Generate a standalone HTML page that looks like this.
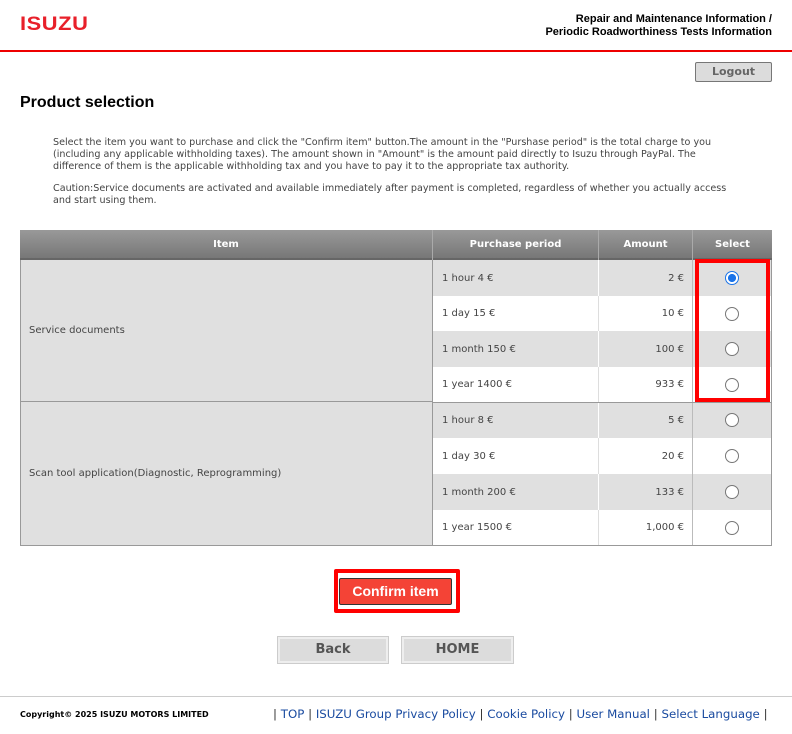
<!DOCTYPE html>
<html><head><meta charset="utf-8"><style>
*{margin:0;padding:0;box-sizing:border-box}
body{width:792px;height:734px;position:relative;background:#fff;font-family:Verdana,"DejaVu Sans","Liberation Sans",sans-serif;color:#333;overflow:hidden}
.a{position:absolute}
.hd{font-family:"Liberation Sans",sans-serif;font-weight:bold;font-size:11px;color:#000;text-align:right;line-height:13px}
.t{font-size:9.6px;line-height:12px;color:#444}
.c{position:absolute;font-size:10px;color:#444;display:flex;align-items:center}
.r{position:absolute;width:14px;height:14px;border:1px solid #777;border-radius:50%;background:#fff}
.btn{position:absolute;background:#dcdcdc;border:2px solid #eee;outline:1px solid #ccc;font-weight:bold;font-size:13px;color:#555;text-align:center}
</style></head><body>
<div class="a" style="left:20px;top:14px;font-family:'Liberation Sans',sans-serif;font-weight:900;font-size:19px;color:#e8202a;letter-spacing:0.5px;transform:scaleX(1.15);transform-origin:left">ISUZU</div>
<div class="a hd" style="right:20px;top:13px">Repair and Maintenance Information /<br>Periodic Roadworthiness Tests Information</div>
<div class="a" style="left:0;top:50px;width:792px;height:2px;background:#e00"></div>
<div class="a" style="left:695px;top:62px;width:77px;height:20px;background:#dcdcdc;border:1px solid #777;border-radius:2px;font-size:11px;font-weight:bold;color:#666;text-align:center;line-height:18px">Logout</div>
<div class="a" style="left:20px;top:94px;font-family:'Liberation Sans',sans-serif;font-weight:bold;font-size:16px;color:#000">Product selection</div>
<div class="a t" style="left:53px;top:137px;width:680px">Select the item you want to purchase and click the "Confirm item" button.The amount in the "Purshase period" is the total charge to you (including any applicable withholding taxes). The amount shown in "Amount" is the amount paid directly to Isuzu through PayPal. The difference of them is the applicable withholding tax and you have to pay it to the appropriate tax authority.</div>
<div class="a t" style="left:53px;top:183px;width:690px">Caution:Service documents are activated and available immediately after payment is completed, regardless of whether you actually access and start using them.</div>

<div class="a" style="left:20px;top:230px;width:752px;height:30px;background:linear-gradient(#999,#777);border-bottom:2px solid #666"></div>
<div class="a" style="left:20px;top:230px;width:412px;height:30px;color:#fff;font-size:10px;font-weight:bold;text-align:center;line-height:30px">Item</div>
<div class="a" style="left:432px;top:230px;width:166px;height:30px;color:#fff;font-size:10px;font-weight:bold;text-align:center;line-height:30px;border-left:1px solid #aaa">Purchase period</div>
<div class="a" style="left:598px;top:230px;width:94px;height:30px;color:#fff;font-size:10px;font-weight:bold;text-align:center;line-height:30px;border-left:1px solid #aaa">Amount</div>
<div class="a" style="left:692px;top:230px;width:80px;height:30px;color:#fff;font-size:10px;font-weight:bold;text-align:center;line-height:30px;border-left:1px solid #aaa">Select</div>

<div class="a" style="left:20px;top:260px;width:752px;height:286px;border:1px solid #999;border-top:none;background:#fff"></div>
<div class="c" style="left:21px;top:260px;width:411px;height:142px;background:#e0e0e0;padding-left:8px;border-bottom:1px solid #999">Service documents</div>
<div class="c" style="left:21px;top:402px;width:411px;height:143px;background:#e0e0e0;padding-left:8px">Scan tool application(Diagnostic, Reprogramming)</div>
<div id="rows"></div>
<script>
var d=[["1 hour 4 €","2 €"],["1 day 15 €","10 €"],["1 month 150 €","100 €"],["1 year 1400 €","933 €"],["1 hour 8 €","5 €"],["1 day 30 €","20 €"],["1 month 200 €","133 €"],["1 year 1500 €","1,000 €"]];
var tops=[260,296,331,367,402,438,474,510,545],h="";
for(var i=0;i<8;i++){var t=tops[i],ht=tops[i+1]-t,bg=i%2==0?"#e0e0e0":"#fff";
h+='<div class="a" style="left:432px;top:'+t+'px;width:339px;height:'+ht+'px;background:'+bg+';border-left:1px solid #999"></div>';
h+='<div class="a" style="left:598px;top:'+t+'px;width:1px;height:'+ht+'px;background:'+(i%2==0?'#fff':'#ddd')+'"></div>';
h+='<div class="a" style="left:692px;top:'+t+'px;width:1px;height:'+ht+'px;background:#bbb"></div>';
h+='<div class="c" style="left:442px;top:'+t+'px;height:'+ht+'px">'+d[i][0]+'</div>';
h+='<div class="c" style="left:598px;top:'+t+'px;width:86px;height:'+ht+'px;justify-content:flex-end">'+d[i][1]+'</div>';
h+='<div class="r" style="left:725px;top:'+(t+ht/2-7)+'px;'+(i==0?'border-color:#1a73e8;background:radial-gradient(#1a73e8 45%,#fff 50%)':'')+'"></div>';}
h+='<div class="a" style="left:432px;top:402px;width:340px;height:1px;background:#999"></div>';
document.getElementById("rows").innerHTML=h;
</script>
<div class="a" style="left:695px;top:259px;width:75px;height:143px;border:4px solid #f00"></div>

<div class="a" style="left:334px;top:569px;width:126px;height:44px;border:4px solid #f00;border-radius:2px"></div>
<div class="a" style="left:339px;top:578px;width:113px;height:27px;background:#f44336;border:1px solid #333;border-radius:2px;color:#fff;font-weight:bold;font-family:'Liberation Sans',sans-serif;font-size:14px;text-align:center;line-height:25px">Confirm item</div>
<div class="btn" style="left:278px;top:637px;width:110px;height:26px;line-height:22px">Back</div>
<div class="btn" style="left:402px;top:637px;width:111px;height:26px;line-height:22px">HOME</div>
<div class="a" style="left:0;top:696px;width:792px;height:1px;background:#ccc"></div>
<div class="a" style="left:20px;top:710px;font-size:8px;font-weight:bold;color:#000">Copyright© 2025 ISUZU MOTORS LIMITED</div>
<div class="a" style="left:273px;top:707px;font-size:11.8px;color:#1a4ba0;white-space:nowrap"><span style="color:#333">|</span> TOP <span style="color:#333">|</span> ISUZU Group Privacy Policy <span style="color:#333">|</span> Cookie Policy <span style="color:#333">|</span> User Manual <span style="color:#333">|</span> Select Language <span style="color:#333">|</span></div>
</body></html>
